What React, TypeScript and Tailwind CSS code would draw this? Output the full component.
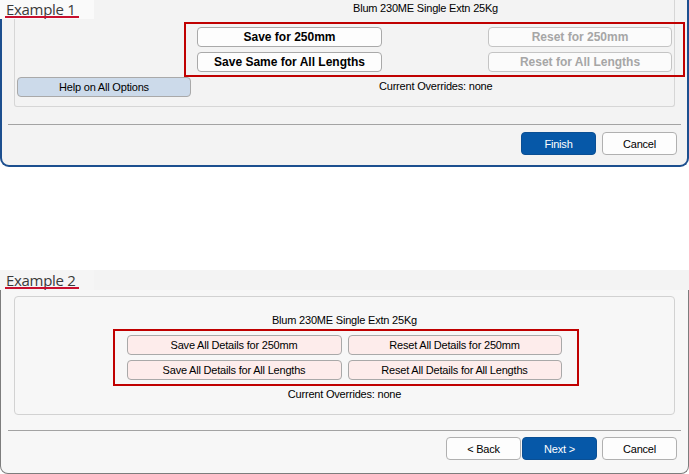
import React from "react";

const btn =
  "h-[20px] rounded-[4px] border border-[#a9a9a9] flex items-center justify-center leading-[14px] whitespace-nowrap";
const footBtn =
  "h-[23px] w-[75px] rounded-[4px] border flex items-center justify-center leading-[14px]";

function Label({ text }: { text: string }) {
  return (
    <div className="relative inline-block whitespace-nowrap pl-[6px] text-[15px] leading-[18px] tracking-[-0.3px] text-[#3a3a3a] font-['Open_Sans','Noto_Sans',sans-serif]">
      {text}
      <div className="absolute left-[5px] top-[16px] h-[2px] w-[74px] bg-[#c8102e]" />
    </div>
  );
}

export default function App() {
  return (
    <div className="w-[689px] h-[474px] bg-white overflow-hidden text-[11px] tracking-[-0.2px] text-black font-['Liberation_Sans',Arial,sans-serif]">
      {/* Example 1 */}
      <div className="relative h-[167px]">
        <div className="h-[167px] w-[689px] border-x-2 border-b-2 border-[#1c4f8f] rounded-b-[9px] bg-[#f3f3f3] flex flex-col">
          <div className="ml-[12px] w-[661px] h-[107px] border-x border-b border-[#d6d6d6] rounded-b-[3px] flex flex-col">
            <div className="mt-[1px] ml-[338px] leading-[14px]">Blum 230ME Single Extn 25Kg</div>
            <div className="mt-[7px] ml-[169px] w-[501px] border-2 border-[#c00000] pl-[11px] pt-[3px] pb-[3px] relative z-10">
              <div className="grid grid-cols-[185px_184px] gap-x-[106px] gap-y-[5px] text-[12px] tracking-normal">
                <div className={`${btn} bg-[#fdfdfd] font-bold`}>Save for 250mm</div>
                <div className={`${btn} bg-[#fbfbfb] font-bold text-[#a6a6a6] border-[#c4c4c4]`}>Reset for 250mm</div>
                <div className={`${btn} bg-[#fdfdfd] font-bold`}>Save Same for All Lengths</div>
                <div className={`${btn} bg-[#fbfbfb] font-bold text-[#a6a6a6] border-[#c4c4c4]`}>Reset for All Lengths</div>
              </div>
            </div>
            <div className="flex items-start">
              <div className={`${btn} ml-[2px] w-[174px] bg-[#ccdaea] border-[#9aa3ad]`}>Help on All Options</div>
              <div className="ml-[188px] mt-[2px] leading-[14px]">Current Overrides: none</div>
            </div>
          </div>
          <div className="mt-[17px] ml-[6px] w-[673px] h-px bg-[#a3a3a3]" />
          <div className="mt-[7px] flex justify-end pr-[10px] gap-[6px]">
            <div className={`${footBtn} bg-[#0658a8] border-[#0a4f94] text-white`}>Finish</div>
            <div className={`${footBtn} bg-[#fdfdfd] border-[#b0b0b0]`}>Cancel</div>
          </div>
        </div>
        <div className="absolute left-0 top-0 w-[94px] h-[19px] bg-[#fafafa]">
          <Label text="Example 1" />
        </div>
      </div>

      {/* Example 2 */}
      <div className="mt-[103px]">
        <div className="h-[20px] bg-[#f3f3f3]">
          <div className="w-[94px] h-[20px] bg-[#f5f5f5] pt-[1px]">
            <Label text="Example 2" />
          </div>
        </div>
        <div className="h-[184px] w-[689px] border-x border-b border-[#7d7d7d] rounded-b-[8px] bg-[#f7f7f7] flex flex-col">
          <div className="mt-[6px] ml-[13px] w-[661px] h-[119px] border border-[#d2d2d2] rounded-[4px] flex flex-col items-center">
            <div className="mt-[16px] leading-[14px]">Blum 230ME Single Extn 25Kg</div>
            <div className="mt-[2px] ml-[2px] w-[466px] border-2 border-[#c00000] pl-[12px] pt-[4px] pb-[4px]">
              <div className="grid grid-cols-[215px_214px] gap-x-[6px] gap-y-[5px]">
                <div className={`${btn} bg-[#fdeceb]`}>Save All Details for 250mm</div>
                <div className={`${btn} bg-[#fdeceb]`}>Reset All Details for 250mm</div>
                <div className={`${btn} bg-[#fdeceb]`}>Save All Details for All Lengths</div>
                <div className={`${btn} bg-[#fdeceb]`}>Reset All Details for All Lengths</div>
              </div>
            </div>
            <div className="leading-[14px] mt-[1px]">Current Overrides: none</div>
          </div>
          <div className="mt-[15px] ml-[7px] w-[673px] h-px bg-[#a3a3a3]" />
          <div className="mt-[6px] flex justify-end pr-[11px]">
            <div className={`${footBtn} bg-[#fdfdfd] border-[#b0b0b0]`}>&lt; Back</div>
            <div className={`${footBtn} ml-[1px] bg-[#0658a8] border-[#0a4f94] text-white`}>Next &gt;</div>
            <div className={`${footBtn} ml-[5px] bg-[#fdfdfd] border-[#b0b0b0]`}>Cancel</div>
          </div>
        </div>
      </div>
    </div>
  );
}
